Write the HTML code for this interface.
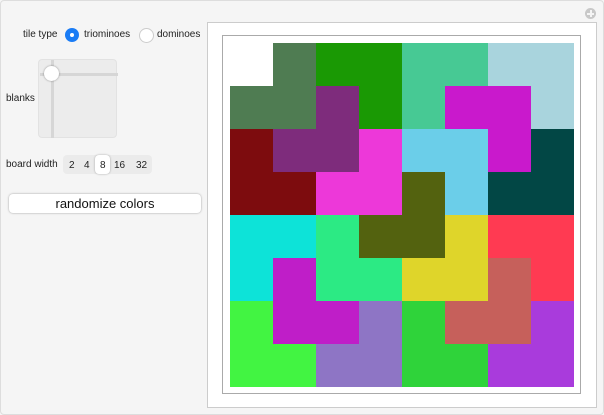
<!DOCTYPE html>
<html><head><style>
body{margin:0;width:604px;height:415px;background:#f5f5f5;font-family:"Liberation Sans",sans-serif;position:relative;overflow:hidden}
.a{position:absolute}
.lbl{font-size:10px;color:#222}
#grid{position:absolute;left:230px;top:43px;width:344px;height:344px;display:grid;grid-template-columns:repeat(8,43px);grid-template-rows:repeat(8,43px)}
</style></head><body>
<div class="a" style="left:0;top:0;width:604px;height:415px;border:1px solid #ddd;box-sizing:border-box;border-radius:4px"></div>
<div class="a" style="left:585px;top:8px;width:11px;height:11px;border-radius:50%;background:#c8c8c8"></div>
<div class="a" style="left:587px;top:12.5px;width:7px;height:2px;background:#f4f4f4"></div>
<div class="a" style="left:589.5px;top:10px;width:2px;height:7px;background:#f4f4f4"></div>

<div class="a lbl" style="left:23px;top:29px">tile type</div>
<div class="a" style="left:65px;top:28px;width:14px;height:14px;border-radius:50%;background:#1a7cf5"></div>
<div class="a" style="left:70px;top:33px;width:4px;height:4px;border-radius:50%;background:#fff"></div>
<div class="a lbl" style="left:84px;top:29px">triominoes</div>
<div class="a" style="left:139px;top:28px;width:13px;height:13px;border-radius:50%;background:#fff;border:1px solid #ccc"></div>
<div class="a lbl" style="left:157px;top:29px">dominoes</div>

<div class="a" style="left:38px;top:59px;width:79px;height:79px;background:#ececec;border:1px solid #e2e2e2;border-radius:4px;box-sizing:border-box"></div>
<div class="a" style="left:40px;top:73px;width:78px;height:3px;background:#d6d6d6"></div>
<div class="a" style="left:51px;top:60px;width:3px;height:78px;background:#d6d6d6"></div>
<div class="a" style="left:44px;top:66px;width:15px;height:15px;border-radius:50%;background:#fff;box-shadow:0 0 2px rgba(0,0,0,.4)"></div>
<div class="a lbl" style="left:6px;top:93px">blanks</div>

<div class="a lbl" style="left:6px;top:159px">board width</div>
<div class="a" style="left:63px;top:155px;width:89px;height:19px;background:#ebebeb;border-radius:4px"></div>
<div class="a" style="left:95px;top:155px;width:15px;height:19px;background:#fff;border-radius:4px;box-shadow:0 0 2px rgba(0,0,0,.3)"></div>
<div class="a lbl" style="left:69px;top:160px">2</div>
<div class="a lbl" style="left:84px;top:160px">4</div>
<div class="a lbl" style="left:100px;top:160px">8</div>
<div class="a lbl" style="left:114px;top:160px">16</div>
<div class="a lbl" style="left:136px;top:160px">32</div>

<div class="a" style="left:9px;top:194px;width:192px;height:19px;background:#fff;border-radius:4px;box-shadow:0 0 2px rgba(0,0,0,.35);text-align:center;font-size:13px;line-height:20px;color:#111">randomize colors</div>

<div class="a" style="left:207px;top:22px;width:390px;height:386px;background:#fff;border:1px solid #ccc;box-sizing:border-box"></div>
<div class="a" style="left:222px;top:35px;width:359px;height:359px;border:1px solid #aaa;box-sizing:border-box"></div>
<div id="grid"></div>
<script>
var c={W:'#fff',a:'#4f7c52',b:'#1a9904',c:'#47c994',d:'#a9d4dd',e:'#7e2c7c',f:'#c919cc',g:'#7d0c0e',h:'#ed38d9',i:'#6bcee9',j:'#024745',k:'#53620f',l:'#0de3d8',m:'#2cea84',n:'#dfd52a',o:'#ff3a52',p:'#bf1ec8',q:'#c6605b',r:'#42f442',s:'#8e75c5',t:'#2fd33a',u:'#a93bdc'};
var rows=["Wabbccdd","aaebcffd","geehiifj","gghhkijj","llmkknoo","lpmmnnqo","rppstqqu","rrssttuu"];
var g=document.getElementById('grid'),h='';
rows.forEach(function(r){for(var k=0;k<8;k++)h+='<div style="background:'+c[r[k]]+'"></div>';});
g.innerHTML=h;
</script>
</body></html>
